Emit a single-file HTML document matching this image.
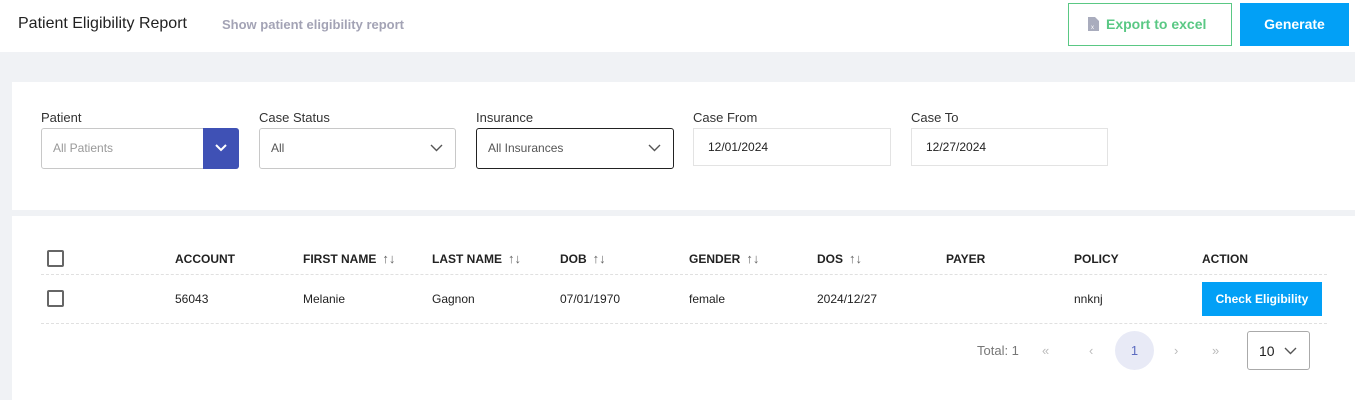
<!DOCTYPE html>
<html><head><style>
*{box-sizing:border-box;margin:0;padding:0}
body{width:1355px;height:400px;overflow:hidden;background:#f0f2f5;font-family:"Liberation Sans",sans-serif;position:relative;color:#222}
.a{position:absolute}
.hdr{left:0;top:0;width:1355px;height:52px;background:#fff}
.card{background:#fff;left:12px;width:1343px}
.lbl{font-size:13px;color:#333}
.box{height:41px;border:1px solid #c8c8c8;border-radius:3px;background:#fff;font-size:12px;padding-left:11px;line-height:39px;color:#555}
.chev{position:absolute;right:12px;top:14px}
.th{font-size:12px;font-weight:bold;color:#222;top:252px;line-height:14px;height:14px}
.td{font-size:12px;color:#222;top:292px}
.cb{width:17px;height:17px;border:2px solid #666;border-radius:2px}
.dash{height:0;border-top:1px dashed #e0e0e0;left:41px;width:1286px}
.sort{font-size:13px;line-height:14px;color:#666;margin-left:6px;font-weight:normal;vertical-align:top}
.pg{font-size:13px;color:#bbb;top:343px}
</style></head><body>
<div class="a hdr"></div>
<div class="a" style="left:18px;top:15px;font-size:16px;color:#222">Patient Eligibility Report</div>
<div class="a" style="left:222px;top:17px;font-size:13px;color:#a3a3b5;font-weight:bold">Show patient eligibility report</div>
<div class="a" style="left:1068px;top:3px;width:164px;height:43px;border:1px solid #5ac884;color:#5ac884;font-size:14px;font-weight:bold;line-height:41px;padding-left:37px">Export to excel</div>
<svg class="a" style="left:1088px;top:17px" width="11" height="14"><path d="M0 0H7L11 4V14H0Z" fill="#a9acbd"/><text x="3" y="12" font-size="6" fill="#fff" font-family="Liberation Sans">x</text></svg>
<div class="a" style="left:1240px;top:3px;width:109px;height:43px;background:#02a0f6;color:#fff;font-size:14px;font-weight:bold;line-height:43px;text-align:center">Generate</div>

<div class="a card" style="top:82px;height:128px"></div>
<div class="a lbl" style="left:41px;top:110px">Patient</div>
<div class="a box" style="left:41px;top:128px;width:198px;color:#999">All Patients</div>
<div class="a" style="left:203px;top:128px;width:36px;height:41px;background:#3f51b5;border-radius:0 3px 3px 0"><svg class="chev" style="right:12px;top:16px" width="12" height="8"><path d="M1 1L6 6L11 1" stroke="#fff" stroke-width="2" fill="none"/></svg></div>
<div class="a lbl" style="left:259px;top:110px">Case Status</div>
<div class="a box" style="left:259px;top:128px;width:197px">All<svg class="chev" style="top:15px" width="13" height="8"><path d="M1 1L6.5 6.5L12 1" stroke="#555" stroke-width="1.4" fill="none"/></svg></div>
<div class="a lbl" style="left:476px;top:110px">Insurance</div>
<div class="a box" style="left:476px;top:128px;width:198px;border-color:#222">All Insurances<svg class="chev" style="top:15px" width="13" height="8"><path d="M1 1L6.5 6.5L12 1" stroke="#555" stroke-width="1.4" fill="none"/></svg></div>
<div class="a lbl" style="left:693px;top:110px">Case From</div>
<div class="a box" style="left:693px;top:128px;width:198px;height:38px;border-color:#e3e3e3;border-radius:0;padding-left:14px;line-height:36px;color:#222">12/01/2024</div>
<div class="a lbl" style="left:911px;top:110px">Case To</div>
<div class="a box" style="left:911px;top:128px;width:197px;height:38px;border-color:#e3e3e3;border-radius:0;padding-left:14px;line-height:36px;color:#222">12/27/2024</div>

<div class="a card" style="top:216px;height:184px"></div>
<div class="a cb" style="left:47px;top:250px"></div>
<div class="a th" style="left:175px">ACCOUNT</div>
<div class="a th" style="left:303px">FIRST NAME<span class="sort">↑↓</span></div>
<div class="a th" style="left:432px">LAST NAME<span class="sort">↑↓</span></div>
<div class="a th" style="left:560px">DOB<span class="sort">↑↓</span></div>
<div class="a th" style="left:689px">GENDER<span class="sort">↑↓</span></div>
<div class="a th" style="left:817px">DOS<span class="sort">↑↓</span></div>
<div class="a th" style="left:946px">PAYER</div>
<div class="a th" style="left:1074px">POLICY</div>
<div class="a th" style="left:1202px">ACTION</div>
<div class="a dash" style="top:274px"></div>
<div class="a cb" style="left:47px;top:290px"></div>
<div class="a td" style="left:175px">56043</div>
<div class="a td" style="left:303px">Melanie</div>
<div class="a td" style="left:432px">Gagnon</div>
<div class="a td" style="left:560px">07/01/1970</div>
<div class="a td" style="left:689px">female</div>
<div class="a td" style="left:817px">2024/12/27</div>
<div class="a td" style="left:1074px">nnknj</div>
<div class="a" style="left:1202px;top:282px;width:120px;height:34px;background:#02a0f6;color:#fff;font-size:12px;font-weight:bold;text-align:center;line-height:34px">Check Eligibility</div>
<div class="a dash" style="top:323px"></div>
<div class="a pg" style="left:977px;color:#777">Total: 1</div>
<div class="a pg" style="left:1042px">«</div>
<div class="a pg" style="left:1089px">‹</div>
<div class="a" style="left:1115px;top:331px;width:39px;height:39px;border-radius:50%;background:#e8eaf6;color:#5c6bc0;font-size:13px;text-align:center;line-height:39px">1</div>
<div class="a pg" style="left:1174px">›</div>
<div class="a pg" style="left:1212px">»</div>
<div class="a" style="left:1247px;top:331px;width:63px;height:39px;border:1px solid #aaa;border-radius:3px;font-size:14px;line-height:39px;padding-left:11px">10<svg class="chev" style="top:15px" width="13" height="8"><path d="M1 1L6.5 6.5L12 1" stroke="#555" stroke-width="1.4" fill="none"/></svg></div>
</body></html>
